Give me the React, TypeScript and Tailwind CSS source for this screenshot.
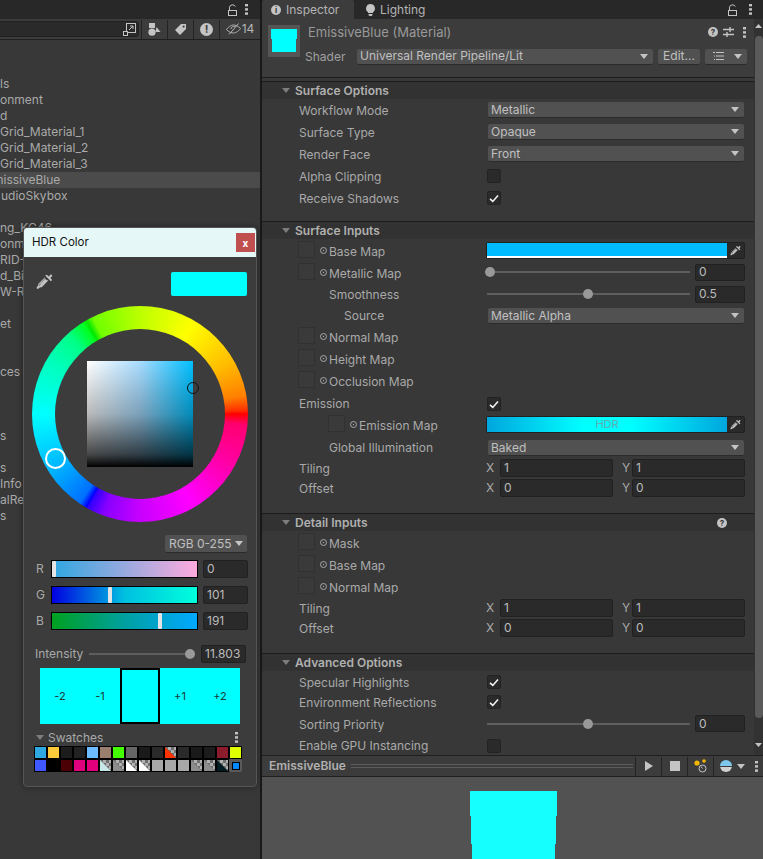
import { FC, ReactNode } from "react";

const Dots = () => (
  <svg width="3" height="11" viewBox="0 0 3 11" fill="#c4c4c4">
    <rect x="0" y="0" width="3" height="2.4" />
    <rect x="0" y="4.2" width="3" height="2.4" />
    <rect x="0" y="8.4" width="3" height="2.4" />
  </svg>
);

const Lock = () => (
  <svg width="9" height="12" viewBox="0 0 9 12" fill="none" stroke="#c4c4c4" strokeWidth="1">
    <rect x="0.5" y="6.5" width="8" height="5" />
    <path d="M1.5 6V3.2a3 2.7 0 0 1 5.8-.6" />
  </svg>
);

const Arrow: FC<{ color?: string }> = ({ color = "#c4c4c4" }) => (
  <svg width="8" height="5" viewBox="0 0 8 5" fill={color}>
    <path d="M0 0h8L4 5z" />
  </svg>
);

const Pipette: FC<{ size?: number }> = ({ size = 12 }) => (
  <svg width={size} height={size} viewBox="0 0 16 16" fill="#c2c2c2">
    <path d="M10.2 1.6 12 3.3l1.3-1.4c.5-.5 1.2-.5 1.6-.1.5.5.4 1.2 0 1.6l-1.4 1.4 1.7 1.7-1.3 1.3-5.3-5.4z" />
    <path d="M8.2 4.3 3 9.5c-.5.5-.8 1-.9 1.6l-.2 1-1 1c-.5.5-.5 1.2 0 1.6.4.5 1.1.5 1.6 0l1-1 1-.2c.6-.1 1.1-.4 1.6-.9l5.2-5.2-1-1-5.1 5.2-2.1.5.5-2.1 5.1-5.2z" />
    <path d="M4.3 9.7 8.6 5.4l2 2-4.3 4.3-2.8.9z" />
  </svg>
);

const Check = () => (
  <svg width="10" height="9" viewBox="0 0 10 9" fill="none" stroke="#f2f2f2" strokeWidth="1.6">
    <path d="M1 4.8 3.8 7.4 9 1.4" />
  </svg>
);

const Checkbox: FC<{ on?: boolean }> = ({ on }) => (
  <div className="ml-[-1px] flex h-[14px] w-[14px] items-center justify-center rounded-[2px] border border-[#232323] bg-[#2a2a2a]">
    {on && <Check />}
  </div>
);

const Dropdown: FC<{ text: string }> = ({ text }) => (
  <div className="flex h-[16px] w-[256px] items-center justify-between rounded-[2px] border-b border-[#2b2b2b] bg-[#515151] pl-[3px] pr-[5px] text-[#c0c0c0]">
    <span>{text}</span>
    <Arrow />
  </div>
);

const NumberField: FC<{ value: string; className?: string }> = ({ value, className }) => (
  <div className={`flex h-[17px] items-center rounded-[2px] border border-[#212121] bg-[#2a2a2a] pl-[3px] text-[#bcbcbc] ${className ?? "w-[50px]"}`}>
    {value}
  </div>
);

const Slider: FC<{ knob: string; value: string }> = ({ knob, value }) => (
  <div className="ml-[-1px] flex w-[258px] items-center">
    <div className="relative h-[2px] w-[203px] bg-[#5e5e5e]">
      <div className={`absolute top-[-4px] h-[10px] w-[10px] rounded-full bg-[#999999] ${knob}`} />
    </div>
    <NumberField value={value} className="ml-[5px] w-[50px]" />
  </div>
);

const Row: FC<{ h: string; children?: ReactNode; label?: string; indent?: string; shift?: string }> = ({ h, children, label, indent = "pl-[37px]", shift = "" }) => (
  <div className={`flex items-center ${h}`}>
    <div className={`w-[226px] shrink-0 ${indent}`}>{label}</div>
    <div className={shift}>{children}</div>
  </div>
);

const TexRow: FC<{ label: string; wide?: boolean; children?: ReactNode }> = ({ label, wide, children }) => (
  <div className="flex h-[22px] items-center">
    <div className={`flex w-[226px] shrink-0 items-center ${wide ? "pl-[66px]" : "pl-[36px]"}`}>
      <div className="mt-[-5px] h-[17px] w-[17px] border border-[#313131] bg-[#3a3a3a]" />
      <svg width="7" height="7" viewBox="0 0 7 7" fill="none" stroke="#a9a9a9" className="ml-[5px] mr-[2px] mt-[-3px]">
        <circle cx="3.5" cy="3.5" r="3" />
        <circle cx="3.5" cy="3.5" r="0.7" fill="#a9a9a9" stroke="none" />
      </svg>
      <span>{label}</span>
    </div>
    <div className="mt-[-4px]">{children}</div>
  </div>
);

const SectionHead: FC<{ title: string; help?: boolean }> = ({ title, help }) => (
  <div className="flex h-[18px] items-center border-t border-[#1c1c1c] bg-[#323232] pl-[20px] pr-[27px]">
    <Arrow color="#7d7d7d" />
    <span className="ml-[5px] flex-1 font-semibold text-[#b0b0b0]">{title}</span>
    {help && <HelpIcon />}
  </div>
);

const HelpIcon = () => (
  <div className="flex h-[10px] w-[10px] items-center justify-center rounded-full bg-[#c4c4c4] text-[8px] font-bold leading-none text-[#333333]">?</div>
);

const XY: FC<{ label: string; x: string; y: string }> = ({ label, x, y }) => (
  <Row h="h-[20px]" label={label} shift="mt-[-2px]">
    <div className="ml-[-2px] flex items-center">
      <span className="w-[14px] text-[#a9a9a9]">X</span>
      <NumberField value={x} className="h-[18px] w-[113px]" />
      <span className="ml-[9px] w-[10px] text-[#a9a9a9]">Y</span>
      <NumberField value={y} className="h-[18px] w-[113px]" />
    </div>
  </Row>
);

const HeaderIconButton: FC<{ className: string; children: ReactNode }> = ({ className, children }) => (
  <div className={`flex h-[19px] items-center justify-center border-l border-[#232323] ${className}`}>{children}</div>
);

const listRows = [
  { t: "", c: "" }, { t: "ls", c: "" }, { t: "onment", c: "" }, { t: "d", c: "" },
  { t: "Grid_Material_1", c: "" }, { t: "Grid_Material_2", c: "" }, { t: "Grid_Material_3", c: "" },
  { t: "missiveBlue", c: "-ml-[7px]", sel: true }, { t: "udioSkybox", c: "ml-[1px]" }, { t: "", c: "" },
  { t: "ng_KC46", c: "" }, { t: "onment", c: "" }, { t: "RID-Blue", c: "" }, { t: "d_Bitmap", c: "" }, { t: "W-Rough", c: "" },
  { t: "", c: "" }, { t: "et", c: "" }, { t: "", c: "" }, { t: "", c: "" }, { t: "ces", c: "" },
  { t: "", c: "" }, { t: "", c: "" }, { t: "", c: "" }, { t: "s", c: "" }, { t: "", c: "" }, { t: "s", c: "" },
  { t: "Info", c: "" }, { t: "alRe", c: "" }, { t: "s", c: "" },
];

const checker = "bg-[conic-gradient(#b0b0b0_25%,#6e6e6e_0_50%,#b0b0b0_0_75%,#6e6e6e_0)] bg-[size:6px_6px]";

const HalfSwatch: FC<{ color: string }> = ({ color }) => (
  <div className={`relative h-[13px] w-[13px] border border-black ${checker}`}>
    <div className={`absolute inset-0 [clip-path:polygon(0_0,100%_100%,0_100%)] ${color}`} />
  </div>
);

const Sw: FC<{ color: string }> = ({ color }) => <div className={`h-[13px] w-[13px] border border-black ${color}`} />;

const RgbRow: FC<{ label: string; grad: string; thumb: string; value: string }> = ({ label, grad, thumb, value }) => (
  <div className="flex h-[18px] items-center pl-[12px]">
    <span className="w-[15px] text-[#a9a9a9]">{label}</span>
    <div className={`relative h-[18px] w-[147px] border border-black ${grad}`}>
      <div className={`absolute top-0 h-full w-[4px] rounded-[1px] bg-[#e4e4e4] ${thumb}`} />
    </div>
    <NumberField value={value} className="ml-[5px] h-[18px] w-[45px]" />
  </div>
);

const HdrPopup = () => (
  <div className="absolute left-[23px] top-[227px] flex h-[560px] w-[234px] flex-col overflow-hidden rounded-[4px] border border-[#555555] bg-[#3c3c3c] text-[#a9a9a9] shadow-[0_0_6px_rgba(0,0,0,0.4)]">
    <div className="flex h-[29px] shrink-0 items-center justify-between bg-[#e6f7f7] pl-[8px] pr-[1px] text-[11.5px] text-[#111111]">
      <span className="mt-[-2px]">HDR Color</span>
      <div className="flex h-[19px] w-[19px] items-center justify-center bg-[#c05050] text-[10px] font-bold leading-none text-white">x</div>
    </div>
    <div className="flex h-[40px] shrink-0 items-center justify-between pl-[12px] pr-[9px] pt-[13px]">
      <div className="mt-[-4px]">
        <Pipette size={17} />
      </div>
      <div className="h-[24px] w-[76px] rounded-[2px] bg-[#00ffff]" />
    </div>
    <div className="relative ml-[8px] mt-[9px] flex h-[216px] w-[216px] shrink-0 items-center justify-center rounded-full bg-[conic-gradient(from_90deg,#ff0000_0deg,#ff0070_6deg,#ff00a8_30deg,#ff00ff_60deg,#c800ff_90deg,#8800ff_110deg,#3000ff_119deg,#0000ff_120deg,#0070ff_124deg,#00bcff_150deg,#00ffff_180deg,#00ffbc_210deg,#00ff88_228deg,#00ff20_238deg,#00e800_240deg,#70ff00_244deg,#bcff00_270deg,#ffff00_300deg,#ffbc00_330deg,#ff8000_350deg,#ff3000_358deg,#ff0000_360deg)]">
      <div className="flex h-[170px] w-[170px] items-center justify-center rounded-full bg-[#3c3c3c]">
        <div className="relative h-[106px] w-[106px] bg-[linear-gradient(to_bottom,transparent_0%,rgba(0,0,0,0.27)_50%,rgba(0,0,0,0.72)_88%,#000_100%),linear-gradient(to_right,#ffffff,#a8dcff_50%,#00bfff)]">
          <div className="absolute left-[100px] top-[21px] h-[12px] w-[12px] rounded-full border border-[#111111]" />
        </div>
      </div>
      <div className="absolute left-[13px] top-[142px] h-[21px] w-[21px] rounded-full border-2 border-white" />
    </div>
    <div className="mt-[13px] flex shrink-0 justify-end pr-[9px]">
      <div className="flex h-[18px] w-[82px] items-center justify-between rounded-[2px] border-b border-[#2b2b2b] bg-[#515151] px-[4px] text-[#c0c0c0]">
        <span>RGB 0-255</span>
        <Arrow />
      </div>
    </div>
    <div className="mt-[7px] flex shrink-0 flex-col gap-[8px]">
      <RgbRow label="R" grad="bg-[linear-gradient(to_right,#2ea8e0,#ffaadd)]" thumb="left-0" value="0" />
      <RgbRow label="G" grad="bg-[linear-gradient(to_right,#0000e0,#00c0e0,#00ffdd)]" thumb="left-[56px]" value="101" />
      <RgbRow label="B" grad="bg-[linear-gradient(to_right,#00a020,#00a0a0,#00a8ff)]" thumb="left-[106px]" value="191" />
    </div>
    <div className="mt-[15px] flex h-[18px] shrink-0 items-center pl-[11px]">
      <span className="w-[54px]">Intensity</span>
      <div className="relative h-[2px] w-[103px] bg-[#5e5e5e]">
        <div className="absolute right-[-3px] top-[-4px] h-[10px] w-[10px] rounded-full bg-[#999999]" />
      </div>
      <NumberField value="11.803" className="ml-[9px] h-[18px] w-[45px]" />
    </div>
    <div className="ml-[16px] mt-[5px] flex h-[56px] w-[200px] shrink-0 items-center bg-[#00ffff] text-[11px] text-[#1c3838]">
      <span className="w-[40px] text-center">-2</span>
      <span className="w-[40px] text-center">-1</span>
      <div className="h-[56px] w-[40px] border-2 border-black" />
      <span className="w-[40px] text-center">+1</span>
      <span className="w-[40px] text-center">+2</span>
    </div>
    <div className="flex h-[22px] shrink-0 items-center justify-between pl-[12px] pr-[18px] pt-[5px]">
      <div className="flex items-center">
        <Arrow color="#7d7d7d" />
        <span className="ml-[4px]">Swatches</span>
      </div>
      <Dots />
    </div>
    <div className="ml-[10px] grid w-[208px] shrink-0 grid-cols-[repeat(16,13px)]">
      <Sw color="bg-[#2ea8e0]" />
      <Sw color="bg-[#ffc93c]" />
      <Sw color="bg-[#1c1c1c]" />
      <Sw color="bg-[#222222]" />
      <Sw color="bg-[#6cbcff]" />
      <Sw color="bg-[#9a7f6e]" />
      <Sw color="bg-[#44ff00]" />
      <Sw color="bg-[#666666]" />
      <Sw color="bg-[#1a1a1a]" />
      <Sw color="bg-[#2a2a2a]" />
      <HalfSwatch color="bg-[#ff3300]" />
      <Sw color="bg-[#2a2a2a]" />
      <Sw color="bg-[#1a1a1a]" />
      <Sw color="bg-[#1c1c1c]" />
      <Sw color="bg-[#8c1c2c]" />
      <Sw color="bg-[#e0ff00]" />
      <Sw color="bg-[#3f58ff]" />
      <Sw color="bg-[#000000]" />
      <Sw color="bg-[#4a0004]" />
      <Sw color="bg-[#e0007c]" />
      <Sw color="bg-[#e0007c]" />
      <HalfSwatch color="bg-[#c8e8e8]" />
      <HalfSwatch color="bg-[#8c8c8c]" />
      <HalfSwatch color="bg-[#ffffff]" />
      <HalfSwatch color="bg-[#ffffff]" />
      <Sw color="bg-[#a8a8a8]" />
      <Sw color="bg-[#a8a8a8]" />
      <Sw color="bg-[#a8a8a8]" />
      <HalfSwatch color="bg-[#8c8c8c]" />
      <HalfSwatch color="bg-[#8c8c8c]" />
      <HalfSwatch color="bg-[#001c20]" />
      <div className="flex h-[13px] w-[13px] items-center justify-center rounded-[2px] bg-[#5a5a5a]">
        <div className="h-[8px] w-[8px] border border-black bg-[#0088ff]" />
      </div>
    </div>
  </div>
);

const ProjectPanel = () => (
  <div className="flex w-[262px] shrink-0 flex-col overflow-hidden border-r-2 border-[#191919] bg-[#383838] text-[#a9a9a9]">
    <div className="flex h-[19px] shrink-0 items-center justify-end gap-[8px] bg-[#282828] pr-[12px]">
      <Lock />
      <Dots />
    </div>
    <div className="flex h-[21px] shrink-0 items-center border-b border-[#1f1f1f] bg-[#3c3c3c]">
      <div className="flex h-[16px] w-[139px] items-center justify-end rounded-r-[4px] border border-l-0 border-[#212121] bg-[#2a2a2a] pr-[2px]">
        <svg width="13" height="13" viewBox="0 0 13 13" fill="none" stroke="#c4c4c4">
          <rect x="3.5" y="0.5" width="9" height="9" />
          <rect x="0.5" y="8.5" width="4" height="4" fill="#2a2a2a" />
          <path d="M6 7l4-4M7 3h3v3" />
        </svg>
      </div>
      <HeaderIconButton className="ml-[2px] w-[26px]">
        <svg width="13" height="13" viewBox="0 0 13 13" fill="#c4c4c4">
          <path d="M1 0h6v5H1z" />
          <circle cx="4" cy="9.2" r="3.6" />
          <path d="M8.5 4l4 5h-5z" />
        </svg>
      </HeaderIconButton>
      <HeaderIconButton className="w-[26px]">
        <svg width="11" height="11" viewBox="0 0 11 11" fill="#c4c4c4">
          <path d="M6 0h5v5l-6 6-5-5zM8.6 1.4a1 1 0 1 0 .1 0z" fillRule="evenodd" />
        </svg>
      </HeaderIconButton>
      <HeaderIconButton className="w-[26px]">
        <div className="flex h-[13px] w-[13px] items-center justify-center rounded-full bg-[#c4c4c4] text-[11px] font-bold leading-none text-[#3c3c3c]">!</div>
      </HeaderIconButton>
      <HeaderIconButton className="flex-1">
        <svg width="15" height="12" viewBox="0 0 15 12" fill="none" stroke="#b4b4b4" className="mr-[1px]">
          <path d="M0.5 6.5C3 3 6 2 7.5 2s4.5 1 7 3.5C12 9 9 10 7.5 10S3 9.5 0.5 6.5z" />
          <path d="M3 11.5 12.5 0.5M5 6a2.5 2.5 0 0 1 4-2" />
        </svg>
        <span className="text-[#b4b4b4]">14</span>
      </HeaderIconButton>
    </div>
    <div className="flex flex-col pt-[20px]">
      {listRows.map((r, i) => (
        <div key={i} className={`flex h-[16px] shrink-0 items-center overflow-hidden whitespace-nowrap ${r.sel ? "bg-[#4b4b4b]" : ""}`}>
          <span className={r.c}>{r.t}</span>
        </div>
      ))}
    </div>
  </div>
);

const Inspector = () => (
  <div className="flex min-w-0 flex-1 flex-col bg-[#383838] text-[#a9a9a9]">
    <div className="flex h-[19px] shrink-0 items-center bg-[#282828]">
      <div className="flex h-[19px] w-[92px] items-center rounded-t-[2px] bg-[#3c3c3c] pl-[9px] text-[#b4b4b4]">
        <div className="flex h-[10px] w-[10px] items-center justify-center rounded-full bg-[#c4c4c4] text-[8px] font-bold leading-none text-[#333333]">i</div>
        <span className="ml-[5px]">Inspector</span>
      </div>
      <svg width="9" height="12" viewBox="0 0 9 12" fill="#c4c4c4" className="ml-[12px]">
        <path d="M4.5 0a4.5 4.5 0 0 0-2.5 8.2V9h5v-.8A4.5 4.5 0 0 0 4.5 0zM2.5 10h4v1l-1 1h-2l-1-1z" />
      </svg>
      <span className="ml-[5px] flex-1 text-[#b4b4b4]">Lighting</span>
      <div className="mr-[11px] flex items-center gap-[12px]">
        <Lock />
        <Dots />
      </div>
    </div>
    <div className="flex h-[736px] shrink-0">
      <div className="min-w-0 flex-1 overflow-hidden">
        <div className="flex h-[59px] border-b border-[#1c1c1c] bg-[#3c3c3c] pl-[6px]">
          <div className="mt-[6px] flex h-[32px] w-[32px] shrink-0 flex-col items-center bg-[#555555] pt-[4px]">
            <div className="h-[10px] w-[26px] bg-[#00ffff]" />
            <div className="h-[13px] w-[24px] bg-[#00ffff]" />
          </div>
          <div className="flex min-w-0 flex-1 flex-col">
            <div className="flex h-[29px] items-center justify-between pb-[3px] pl-[8px] pr-[8px]">
              <span className="text-[13px] text-[#999999]">EmissiveBlue (Material)</span>
              <div className="flex items-center gap-[5px]">
                <HelpIcon />
                <svg width="11" height="10" viewBox="0 0 11 10" stroke="#c4c4c4" strokeWidth="1.4" fill="none">
                  <path d="M0 2.5h11M0 7.5h11" />
                  <path d="M7 0v5M4 5v5" />
                </svg>
                <span className="ml-[4px] flex"><Dots /></span>
              </div>
            </div>
            <div className="flex h-[17px] items-center">
              <span className="ml-[5px] w-[52px] text-[#a0a0a0]">Shader</span>
              <div className="flex h-[16px] w-[296px] items-center justify-between rounded-[2px] border-b border-[#2b2b2b] bg-[#515151] pl-[3px] pr-[5px] text-[#c0c0c0]">
                <span>Universal Render Pipeline/Lit</span>
                <Arrow />
              </div>
              <div className="ml-[5px] flex h-[16px] w-[42px] items-center justify-center rounded-[2px] border-b border-[#2b2b2b] bg-[#515151] text-[#c0c0c0]">Edit...</div>
              <div className="ml-[5px] flex h-[16px] w-[42px] items-center justify-between rounded-[2px] border-b border-[#2b2b2b] bg-[#515151] pl-[8px] pr-[5px]">
                <svg width="11" height="8" viewBox="0 0 11 8" stroke="#c4c4c4" fill="none">
                  <path d="M0 0.5h2M3 0.5h8M1 4h1M3 4h8M1 7.5h1M3 7.5h8" />
                </svg>
                <Arrow />
              </div>
            </div>
          </div>
        </div>
        <div className="h-[3px]" />

        <SectionHead title="Surface Options" />
        <div className="h-[1px]" />
        <Row h="h-[22px]" label="Workflow Mode" shift="mt-[-2px]"><Dropdown text="Metallic" /></Row>
        <Row h="h-[22px]" label="Surface Type" shift="mt-[-2px]"><Dropdown text="Opaque" /></Row>
        <Row h="h-[22px]" label="Render Face" shift="mt-[-2px]"><Dropdown text="Front" /></Row>
        <Row h="h-[22px]" label="Alpha Clipping" shift="mt-[-2px]"><Checkbox /></Row>
        <Row h="h-[22px]" label="Receive Shadows" shift="mt-[-2px]"><Checkbox on /></Row>
        <div className="h-[11px]" />

        <SectionHead title="Surface Inputs" />
        <div className="h-[2px]" />
        <TexRow label="Base Map">
          <div className="ml-[-2px] flex h-[17px] w-[259px] items-stretch rounded-[2px] border border-[#212121] bg-[#2a2a2a]">
            <div className="w-[240px] border-b-2 border-white bg-[#00bbff]" />
            <div className="flex flex-1 items-center justify-center"><Pipette size={11} /></div>
          </div>
        </TexRow>
        <TexRow label="Metallic Map"><Slider knob="left-[-2px]" value="0" /></TexRow>
        <Row h="h-[20px]" label="Smoothness" indent="pl-[67px]" shift="mt-[-2px]"><Slider knob="left-[96px]" value="0.5" /></Row>
        <Row h="h-[22px]" label="Source" indent="pl-[82px]"><Dropdown text="Metallic Alpha" /></Row>
        <TexRow label="Normal Map" />
        <TexRow label="Height Map" />
        <TexRow label="Occlusion Map" />
        <Row h="h-[22px]" label="Emission"><Checkbox on /></Row>
        <TexRow label="Emission Map" wide>
          <div className="ml-[-2px] flex h-[17px] w-[259px] items-stretch rounded-[2px] border border-[#212121] bg-[#2a2a2a]">
            <div className="flex w-[240px] items-center justify-center bg-[linear-gradient(to_right,#00a6de,#00ffff_40%,#00ffff_60%,#00a6de)] text-[11px] text-[#5fb0b0]">HDR</div>
            <div className="flex flex-1 items-center justify-center"><Pipette size={11} /></div>
          </div>
        </TexRow>
        <Row h="h-[22px]" label="Global Illumination" indent="pl-[67px]"><Dropdown text="Baked" /></Row>
        <XY label="Tiling" x="1" y="1" />
        <XY label="Offset" x="0" y="0" />
        <div className="h-[14px]" />

        <SectionHead title="Detail Inputs" help />
        <div className="h-[2px]" />
        <TexRow label="Mask" />
        <TexRow label="Base Map" />
        <TexRow label="Normal Map" />
        <XY label="Tiling" x="1" y="1" />
        <XY label="Offset" x="0" y="0" />
        <div className="h-[14px]" />

        <SectionHead title="Advanced Options" />
        <div className="h-[2px]" />
        <Row h="h-[20px]" label="Specular Highlights" shift="mt-[-2px]"><Checkbox on /></Row>
        <Row h="h-[20px]" label="Environment Reflections" shift="mt-[-2px]"><Checkbox on /></Row>
        <Row h="h-[23px]" label="Sorting Priority" shift="mt-[-2px]"><Slider knob="left-[96px]" value="0" /></Row>
        <Row h="h-[19px]" label="Enable GPU Instancing"><Checkbox /></Row>
      </div>
      <div className="flex w-[9px] shrink-0 flex-col items-center bg-[#323232] pt-[5px]">
        <svg width="7" height="4" viewBox="0 0 7 4" fill="#c4c4c4"><path d="M0 4h7L3.5 0z" /></svg>
        <div className="mt-[8px] h-[682px] w-[8px] rounded-[4px] bg-[#5a5a5a]" />
        <svg width="7" height="4" viewBox="0 0 7 4" fill="#c4c4c4" className="mt-[25px]"><path d="M0 0h7L3.5 4z" /></svg>
      </div>
    </div>
    <div className="flex h-[22px] shrink-0 items-center border-y border-[#1f1f1f] bg-[#3c3c3c] pl-[7px]">
      <span className="w-[82px] font-semibold text-[#b0b0b0]">EmissiveBlue</span>
      <div className="h-[4px] w-[282px] border-y border-[#5c5c5c]" />
      <HeaderIconButton className="ml-[2px] w-[26px]">
        <svg width="8" height="10" viewBox="0 0 8 10" fill="#c4c4c4"><path d="M0 0l8 5-8 5z" /></svg>
      </HeaderIconButton>
      <HeaderIconButton className="w-[26px]">
        <div className="h-[10px] w-[10px] bg-[#c4c4c4]" />
      </HeaderIconButton>
      <HeaderIconButton className="w-[26px]">
        <svg width="14" height="14" viewBox="0 0 14 14" fill="none">
          <circle cx="3" cy="4" r="2.6" fill="#f5b800" />
          <circle cx="10" cy="2" r="1.8" fill="#f5b800" />
          <circle cx="8.5" cy="9.5" r="3.5" stroke="#c4c4c4" />
          <path d="M8.5 9.5l-1.5-2" stroke="#c4c4c4" />
        </svg>
      </HeaderIconButton>
      <HeaderIconButton className="w-[37px] gap-[5px]">
        <div className="h-[12px] w-[12px] rounded-full bg-[linear-gradient(to_bottom,#7ec8ee_50%,#3c3c3c_50%,#3c3c3c_62%,#d0d0d0_62%)]" />
        <Arrow />
      </HeaderIconButton>
      <HeaderIconButton className="flex-1 border-l-0">
        <Dots />
      </HeaderIconButton>
    </div>
    <div className="flex flex-1 flex-col items-center bg-[#525252] pl-[2px] pt-[14px]">
      <div className="h-[25px] w-[87px] bg-[#15ffff]" />
      <div className="h-[28px] w-[85px] bg-[#15ffff]" />
      <div className="h-[15px] w-[83px] bg-[#15ffff]" />
    </div>
  </div>
);

const App: FC = () => {
  return (
    <div className="relative flex h-[859px] w-[763px] overflow-hidden bg-[#191919] font-['Inter',sans-serif] text-[12px] leading-[16px]">
      <ProjectPanel />
      <Inspector />
      <HdrPopup />
    </div>
  );
};

export default App;
